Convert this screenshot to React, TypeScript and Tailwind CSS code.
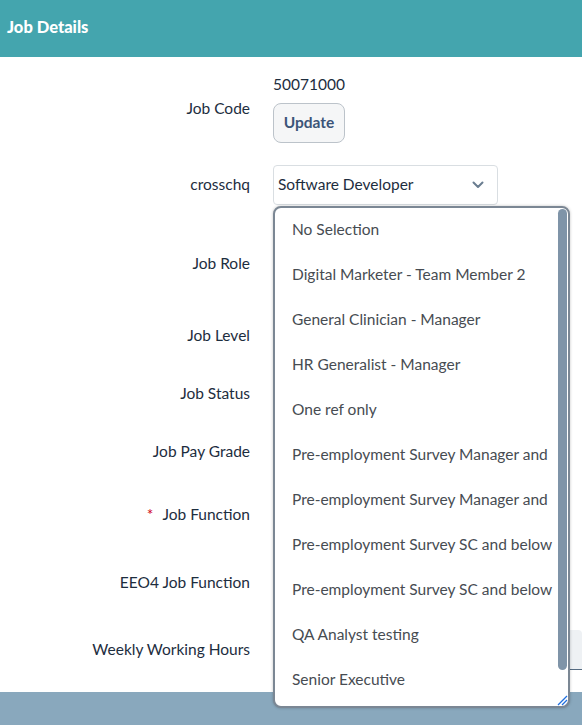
import React from 'react';

const options = [
  'No Selection',
  'Digital Marketer - Team Member 2',
  'General Clinician - Manager',
  'HR Generalist - Manager',
  'One ref only',
  'Pre-employment Survey Manager and',
  'Pre-employment Survey Manager and',
  'Pre-employment Survey SC and below',
  'Pre-employment Survey SC and below',
  'QA Analyst testing',
  'Senior Executive',
];

function Label({ children, required }: { children: React.ReactNode; required?: boolean }) {
  return (
    <div className="w-[250px] shrink-0 text-right text-[15.5px] text-[#1d2d3e]">
      {required && <span className="text-[#d0021b] mr-[9px]">*</span>}
      {children}
    </div>
  );
}

function Row({ label, required, className, children }: { label: string; required?: boolean; className?: string; children?: React.ReactNode }) {
  return (
    <div className={`flex items-center h-[40px] gap-[23px] ${className ?? ''}`}>
      <Label required={required}>{label}</Label>
      <div className="flex-1 h-full">{children}</div>
    </div>
  );
}

export default function App() {
  return (
    <div className="relative w-[582px] h-[725px] overflow-hidden bg-white" style={{ fontFamily: 'Lato, "Liberation Sans", sans-serif' }}>
      <div className="h-[57px] bg-[#44a5ae] flex items-center px-[7px] pb-[2px]">
        <span className="text-white font-black text-[16.5px]">Job Details</span>
      </div>

      <div className="pt-[17px]">
        <div className="flex items-center gap-[23px]">
          <Label>Job Code</Label>
          <div className="flex flex-col items-start">
            <div className="h-[20px] leading-[20px] text-[15.5px] text-[#1d2d3e]">50071000</div>
            <button className="mt-[9px] h-[40px] w-[72px] rounded-lg border border-[#bcc3ca] bg-[#f5f6f7] text-[15.5px] font-bold text-[#3b5478]">
              Update
            </button>
          </div>
        </div>

        <Row label="crosschq" className="mt-[22px]">
          <div className="w-[225px] h-full rounded border border-[#d9dee2] flex items-center justify-between pl-[4px] pr-[13px] text-[15.5px] text-[#1d2d3e]">
            <span>Software Developer</span>
            <svg width="12" height="8" viewBox="0 0 12 8" fill="none">
              <path d="M1.5 1.5 6 6l4.5-4.5" stroke="#6a7d90" strokeWidth="2" strokeLinecap="round" strokeLinejoin="round" />
            </svg>
          </div>
        </Row>
        <Row label="Job Role" className="mt-[39px]" />
        <Row label="Job Level" className="mt-[32px]" />
        <Row label="Job Status" className="mt-[18px]" />
        <Row label="Job Pay Grade" className="mt-[18px]" />
        <Row label="Job Function" required className="mt-[23px]" />
        <Row label="EEO4 Job Function" className="mt-[28px]" />
        <Row label="Weekly Working Hours" className="mt-[27px]">
          <div className="h-full bg-[#eef1f4] border-b border-[#556b82] rounded-t" />
        </Row>
      </div>

      <div className="absolute left-0 right-0 bottom-0 h-[33px] bg-[#89a8bd]" />

      <div className="absolute left-[273px] top-[206px] w-[297px] h-[502px] rounded-lg border-2 border-[#7b8794] bg-white shadow-[0_0_3px_rgba(0,0,0,0.25)] overflow-hidden">
        <ul className="pr-[11px] -mt-[1px]">
          {options.map((o, i) => (
            <li key={i} className="h-[45px] flex items-center pl-[17px] text-[15.5px] text-[#474c52] whitespace-nowrap overflow-hidden">
              {o}
            </li>
          ))}
        </ul>
        <div className="absolute right-[1px] top-[1px] w-[9px] h-[461px] rounded-full bg-[#7f94a8]" />
        <svg className="absolute right-0 bottom-0" width="12" height="12" viewBox="0 0 12 12">
          <path d="M2 11 11 2M6 11l5-5M10 11l1-1" stroke="#1f6fe0" strokeWidth="1.3" />
        </svg>
      </div>
    </div>
  );
}
